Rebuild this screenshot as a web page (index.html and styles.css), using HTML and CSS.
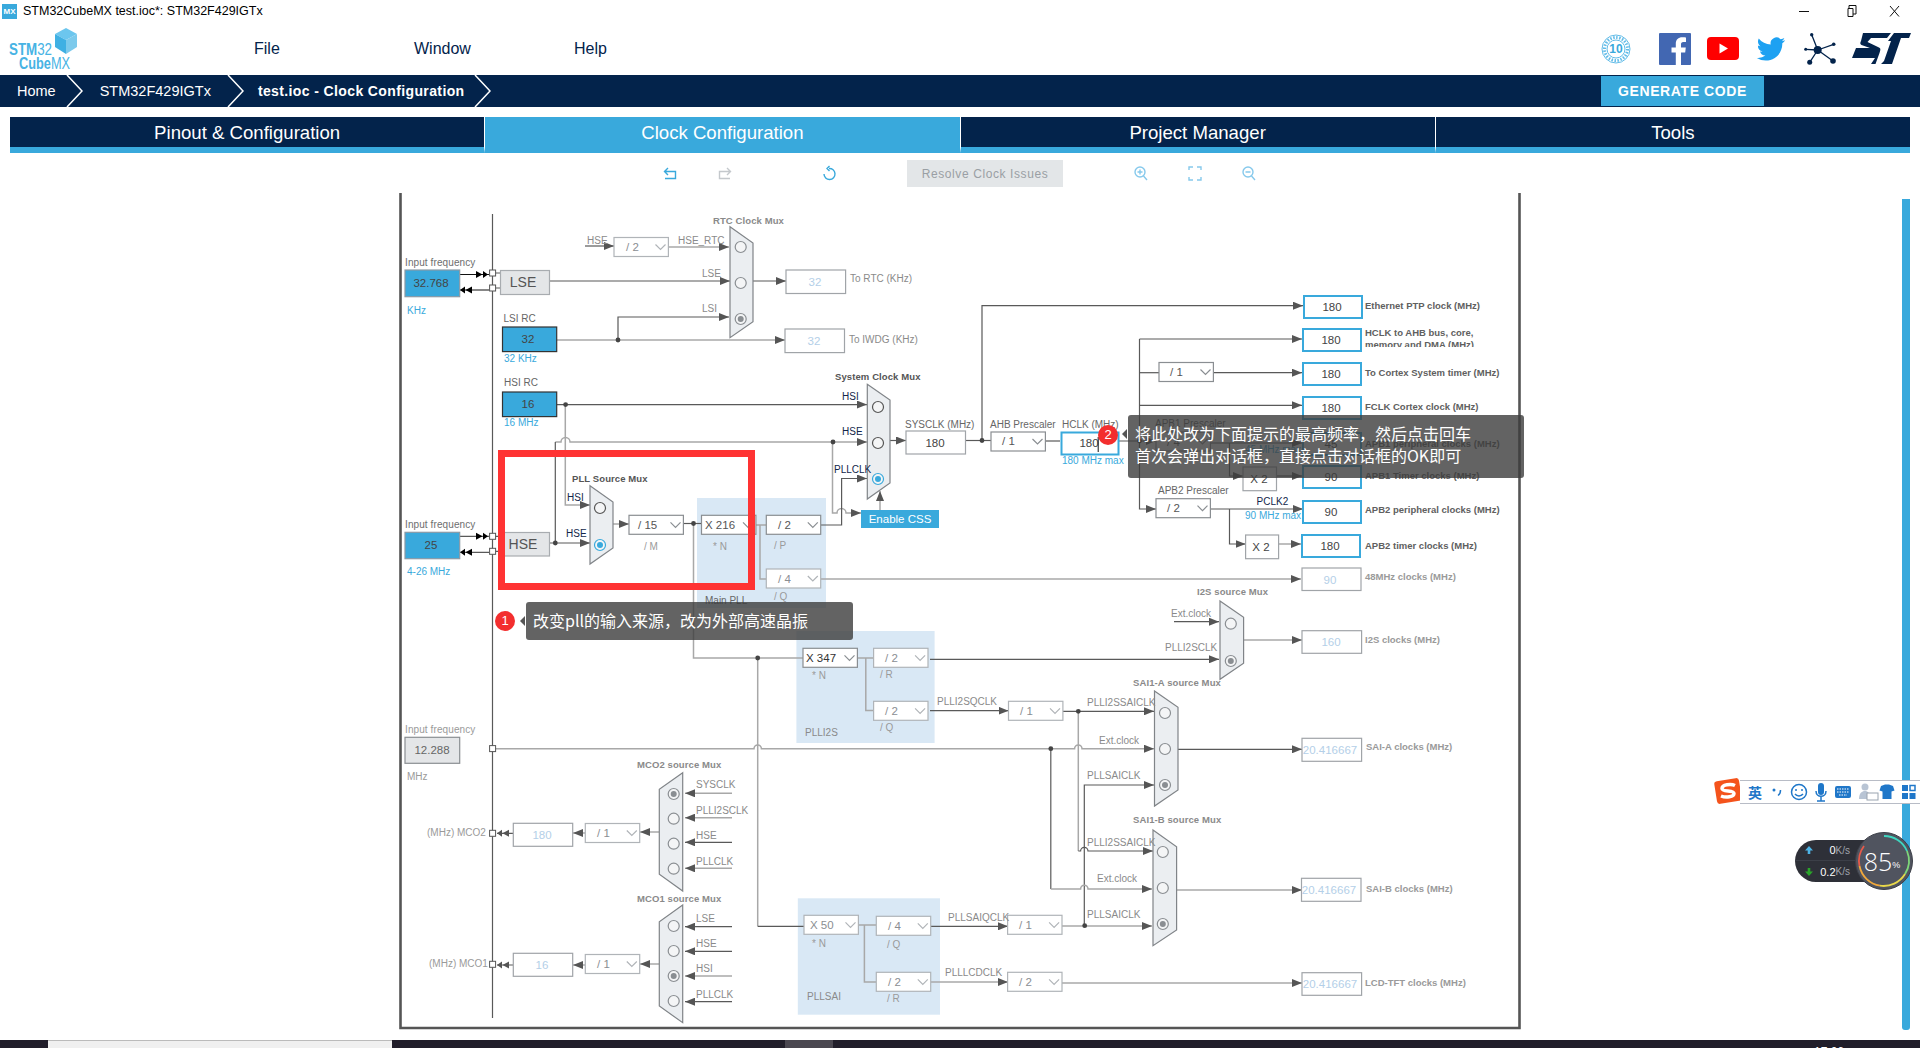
FILE: index.html
```html
<!DOCTYPE html>
<html lang="zh">
<head>
    <meta charset="UTF-8">
    <title>STM32CubeMX test.ioc*: STM32F429IGTx</title>
    <link rel="stylesheet" href="styles.css">
</head>
<body>

<div class="app">

    <div class="titlebar">
        <span class="app-icon">MX</span>
        <span class="title-text">STM32CubeMX test.ioc*: STM32F429IGTx</span>
        <svg class="win-buttons" width="110" height="14" viewBox="0 0 110 14">
            <path d="M9 7.5H19M59 4.5V1.5H66V10H63M58 4.5H63V12.5H58ZM100 2L109 12.5M109 2L100 12.5"/>
        </svg>
    </div>

    <div class="header">
        <svg class="logo" width="70" height="42" viewBox="0 0 70 42">
            <path class="cube-top" d="M57 0L68 6L57 12L46 6Z"/>
            <path class="cube-left" d="M46 6L57 12V26L46 19Z"/>
            <path class="cube-right" d="M68 6L57 12V26L68 19Z"/>
            <text class="logo-text" x="0" y="27" textLength="43" lengthAdjust="spacingAndGlyphs"><tspan class="logo-bold">STM</tspan>32</text>
            <text class="logo-text" x="10" y="41" textLength="51" lengthAdjust="spacingAndGlyphs"><tspan class="logo-bold">Cube</tspan>MX</text>
        </svg>
        <nav class="menu">
            <span>File</span>
            <span>Window</span>
            <span>Help</span>
        </nav>
        <div class="social">
            <svg class="seal" width="30" height="30" viewBox="0 0 30 30">
                <circle cx="15" cy="15" r="14"/>
                <circle class="seal-dash" cx="15" cy="15" r="11.5"/>
                <circle cx="15" cy="15" r="9"/>
                <text x="15" y="19" class="seal-text">10</text>
            </svg>
            <svg width="32" height="32" viewBox="0 0 32 32">
                <rect class="fb" width="32" height="32" rx="1"/>
                <path class="white" d="M22 32V19.5h4.2l.6-5H22v-3.2c0-1.4.4-2.4 2.4-2.4h2.6V4.5c-.5 0-2-.2-3.8-.2-3.8 0-6.4 2.3-6.4 6.5v3.7h-4.3v5h4.3V32z"/>
            </svg>
            <svg width="32" height="24" viewBox="0 0 32 24">
                <rect class="yt" width="32" height="23" rx="4"/>
                <path class="white" d="M12.5 6.5L21 11.5L12.5 16.5Z"/>
            </svg>
            <svg width="32" height="26" viewBox="0 1 24 22">
                <path class="tw" d="M23.953 4.57a10 10 0 01-2.825.775 4.958 4.958 0 002.163-2.723c-.951.555-2.005.959-3.127 1.184a4.92 4.92 0 00-8.384 4.482C7.69 8.095 4.067 6.13 1.64 3.162a4.822 4.822 0 00-.666 2.475c0 1.71.87 3.213 2.188 4.096a4.904 4.904 0 01-2.228-.616v.06a4.923 4.923 0 003.946 4.827 4.996 4.996 0 01-2.212.085 4.936 4.936 0 004.604 3.417 9.867 9.867 0 01-6.102 2.105c-.39 0-.779-.023-1.17-.067a13.995 13.995 0 007.557 2.209c9.053 0 13.998-7.496 13.998-13.985 0-.21 0-.42-.015-.63A9.935 9.935 0 0024 4.59z"/>
            </svg>
            <svg class="net" width="33" height="32" viewBox="0 0 33 32">
                <path d="M14.7 17L8.7 1.7M14.7 17L30.7 11.3M14.7 17L30 28M14.7 17L6.7 29.3M14.7 17L2.7 16.3"/>
                <circle cx="14.7" cy="17" r="4"/>
                <circle cx="8.7" cy="1.7" r="1.7"/>
                <circle cx="30.7" cy="11.3" r="1.8"/>
                <circle cx="30" cy="28" r="2.8"/>
                <circle cx="6.7" cy="29.3" r="2.5"/>
                <circle cx="2.7" cy="16.3" r="1.5"/>
            </svg>
            <svg class="st" width="59" height="32" viewBox="0 0 59 32">
                <path d="M11 0H39L35 5H19L15.5 9L27 14.5C29 15.5 28.5 17 27.5 20L23.5 31H19L23 25H0L4 15H18L9.5 12C8 11 8 10 9 8Z"/>
                <path d="M42 0H59L57 5H49L40 31H29L32 28L39 8H36Z"/>
            </svg>
        </div>
    </div>

    <div class="breadcrumb">
        <span class="crumb crumb-home">Home</span>
        <svg class="chevron" width="17" height="32" viewBox="0 0 17 32"><path d="M1 0L16 16L1 32"/></svg>
        <span class="crumb crumb-device">STM32F429IGTx</span>
        <svg class="chevron" width="17" height="32" viewBox="0 0 17 32"><path d="M1 0L16 16L1 32"/></svg>
        <span class="crumb crumb-current">test.ioc - Clock Configuration</span>
        <svg class="chevron" width="17" height="32" viewBox="0 0 17 32"><path d="M1 0L16 16L1 32"/></svg>
        <button class="generate">GENERATE CODE</button>
    </div>

    <div class="tabs">
        <div class="tab">Pinout &amp; Configuration</div>
        <div class="tab active">Clock Configuration</div>
        <div class="tab">Project Manager</div>
        <div class="tab">Tools</div>
    </div>

    <div class="toolbar">
        <svg class="tool undo" width="16" height="27" viewBox="0 0 16 27"><path d="M6 8L2.500 11.500L6 15M3 11.500H13.500V18.500H3"/></svg>
        <svg class="tool redo" width="16" height="27" viewBox="0 0 16 27"><path d="M10 8L13.500 11.500L10 15M13 11.500H2.500V18.500H13"/></svg>
        <svg class="tool refresh" width="16" height="27" viewBox="0 0 16 27"><path d="M8 8.5A5.5 5.5 0 1 1 3 14M8.5 6L6 8.5L8.5 11"/></svg>
        <button class="resolve">Resolve Clock Issues</button>
        <svg class="tool zoom-in" width="16" height="27" viewBox="0 0 16 27"><circle cx="7" cy="12" r="5"/><path d="M10.5 16L14 20M7 9.5V14.5M4.5 12H9.5"/></svg>
        <svg class="tool fit" width="16" height="27" viewBox="0 0 16 27"><path d="M2 10V7H6M10 7H14V10M14 17V20H10M6 20H2V17"/></svg>
        <svg class="tool zoom-out" width="16" height="27" viewBox="0 0 16 27"><circle cx="7" cy="12" r="5"/><path d="M10.5 16L14 20M4.5 12H9.5"/></svg>
    </div>

    <div class="workspace">
        <svg class="diagram" width="1140" height="850" viewBox="390 190 1140 850">
            <defs>
                <marker id="a" markerUnits="userSpaceOnUse" markerWidth="10" markerHeight="8" refX="10" refY="4" orient="auto">
                    <path class="head" d="M0 0L10 4L0 8Z"/>
                </marker>
                <g id="sel">
                    <rect width="54.4" height="19"/>
                    <path class="chev" d="M41.5 7L46.5 12L51.5 7"/>
                </g>
                <path id="dr" d="M0 -3.5L6.5 0L0 3.5ZM7 -3.5L12 0L7 3.5Z"/>
                <path id="dl" d="M12 -3.5L5.5 0L12 3.5ZM5 -3.5L0 0L5 3.5Z"/>
                <rect id="pin" x="-3" y="-3" width="6" height="6"/>
                <circle id="dot" r="2.4"/>
                <circle id="rad" r="5.5"/>
                <clipPath id="hclk-clip"><rect x="1360" y="326" width="130" height="21"/></clipPath>
            </defs>

            <!-- PLL backgrounds -->
            <rect class="pll-bg" x="697" y="498" width="129" height="110"/>
            <rect class="pll-bg" x="796.4" y="631" width="138.2" height="112"/>
            <rect class="pll-bg" x="797.8" y="898.3" width="142.2" height="116.4"/>

            <path class="frame" d="M400.5 193V1028H1519.5V193"/>
            <path class="d" d="M492.5 214V1018"/>

            <!-- RTC / LSI -->
            <path class="d" marker-end="url(#a)" d="M585 246H614"/>
            <path class="l" marker-end="url(#a)" d="M668 247H729"/>
            <path class="d" marker-end="url(#a)" d="M550 281H730"/>
            <path class="d" marker-end="url(#a)" d="M753 281H786"/>
            <path class="d" marker-end="url(#a)" d="M618 340V317H729"/>
            <path class="l" marker-end="url(#a)" d="M557 340H785"/>
            <path class="k" d="M460 274.5H489M460 290H489"/>
            <path class="d" d="M495.5 273H500M495.5 288H500M460 536.3H489M460 552.3H489M495.5 536.3H500M495.5 551.3H500"/>

            <!-- HSI / HSE / PLL source -->
            <path class="d" marker-end="url(#a)" d="M557 404.6H867"/>
            <path class="l" marker-end="url(#a)" d="M565.3 404.6V505H590"/>
            <path class="l" marker-end="url(#a)" d="M555.3 442H561a4.5 4.5 0 0 1 9 0H867"/>
            <path class="d" d="M555.3 442V543"/>
            <path class="d" marker-end="url(#a)" d="M550 543H590"/>
            <path class="l" marker-end="url(#a)" d="M832.5 442V513H837a4.5 4.5 0 0 1 9 0H861"/>
            <path class="d" marker-end="url(#a)" d="M821 525H841.6V478.5H867"/>
            <path class="l" marker-end="url(#a)" d="M613 524H629"/>
            <path class="d" d="M683.5 523.5H701.5"/>
            <path class="l" d="M693.5 523.5V658H803"/>
            <path class="l" d="M757.7 658V926.3"/>
            <path class="d" d="M757.7 926.3H804"/>
            <path class="l" d="M756 525H766M760 525V579H766"/>
            <path class="l" marker-end="url(#a)" d="M821 579H1301"/>

            <!-- System clock -->
            <path class="d" marker-end="url(#a)" d="M890 440.5H906"/>
            <path class="d" d="M965.5 440.5H991"/>
            <path class="d" marker-end="url(#a)" d="M982 440.5V305.7H1303"/>
            <path class="d" d="M1045.7 441H1060"/>
            <path class="d" marker-end="url(#a)" d="M1119 441H1156"/>
            <path class="d" marker-end="url(#a)" d="M1139.5 339V509H1156"/>
            <path class="d" marker-end="url(#a)" d="M1139.5 339H1302"/>
            <path class="d" d="M1139.5 372.7H1159"/>
            <path class="d" marker-end="url(#a)" d="M1213.5 372.7H1302"/>
            <path class="d" marker-end="url(#a)" d="M1139.5 405.3H1302"/>
            <path class="d" marker-end="url(#a)" d="M1210 443H1302"/>
            <path class="d" marker-end="url(#a)" d="M1229.5 443V476H1243"/>
            <path class="d" marker-end="url(#a)" d="M1276.5 476H1302"/>
            <path class="d" marker-end="url(#a)" d="M1210.6 509H1303"/>
            <path class="d" marker-end="url(#a)" d="M1229.5 509V544H1245.6"/>
            <path class="l" marker-end="url(#a)" d="M1278.6 544H1301"/>
            <path class="l" marker-end="url(#a)" d="M880 510V491"/>

            <!-- I2S -->
            <path class="d" marker-end="url(#a)" d="M1174 621.7H1219"/>
            <path class="d" marker-end="url(#a)" d="M930 659.3H1219"/>
            <path class="l" marker-end="url(#a)" d="M1243.6 640H1302"/>
            <path class="l" d="M858 658H874M865.8 658V710.5H874"/>

            <!-- SAI -->
            <path class="d" marker-end="url(#a)" d="M930 710.7H1008.5"/>
            <path class="d" marker-end="url(#a)" d="M1062.7 711.3H1154"/>
            <path class="l" marker-end="url(#a)" d="M492.6 748.7H754a3.7 3.7 0 0 1 7.4 0H1074.600a3.700 3.700 0 0 1 7.400 0H1154"/>
            <path class="d" marker-end="url(#a)" d="M1084.3 925.7V785H1154"/>
            <path class="l" d="M1078.3 711.3V851"/>
            <path class="d" marker-end="url(#a)" d="M1078.3 851H1080.600a3.700 3.700 0 0 1 7.400 0H1153"/>
            <path class="d" d="M1050.8 748.7V889"/>
            <path class="l" marker-end="url(#a)" d="M1050.8 889H1080.600a3.700 3.700 0 0 1 7.400 0H1152"/>
            <path class="d" marker-end="url(#a)" d="M1178 749.3H1302"/>
            <path class="l" marker-end="url(#a)" d="M1176.6 890H1302"/>
            <path class="l" marker-end="url(#a)" d="M1061.7 983H1302"/>
            <path class="l" d="M858.4 925H876M864.4 925V982H876"/>
            <path class="d" marker-end="url(#a)" d="M930.5 926.3H1008"/>
            <path class="l" marker-end="url(#a)" d="M930.5 982H1008"/>
            <path class="l" marker-end="url(#a)" d="M1061.7 926H1152"/>

            <!-- MCO -->
            <path class="l" marker-end="url(#a)" d="M732 793.3H685"/>
            <path class="l" marker-end="url(#a)" d="M732 817.7H685"/>
            <path class="d" marker-end="url(#a)" d="M732 842.3H685"/>
            <path class="l" marker-end="url(#a)" d="M732 868.3H685"/>
            <path class="l" marker-end="url(#a)" d="M659 832H640"/>
            <path class="l" marker-end="url(#a)" d="M585 833H573"/>
            <path class="d" marker-end="url(#a)" d="M732 926.7H685"/>
            <path class="d" marker-end="url(#a)" d="M732 951.3H685"/>
            <path class="l" marker-end="url(#a)" d="M732 976H685"/>
            <path class="d" marker-end="url(#a)" d="M732 1001.7H685"/>
            <path class="l" marker-end="url(#a)" d="M659 964H640"/>
            <path class="l" marker-end="url(#a)" d="M585 965H573"/>
            <path class="d" d="M497 833.3H513M497 965H513"/>

            <use class="ar-k" href="#dr" x="476" y="274.5"/>
            <use class="ar-k" href="#dl" x="460" y="290"/>
            <use class="ar-k" href="#dr" x="476" y="536.3"/>
            <use class="ar-k" href="#dl" x="460" y="552.3"/>
            <use class="ar-d" href="#dl" x="497" y="833.3"/>
            <use class="ar-d" href="#dl" x="497" y="965"/>

            <use class="pin" href="#pin" x="492.6" y="273"/>
            <use class="pin" href="#pin" x="492.6" y="288"/>
            <use class="pin" href="#pin" x="492.6" y="536.3"/>
            <use class="pin" href="#pin" x="492.6" y="551.3"/>
            <use class="pin" href="#pin" x="492.6" y="748.6"/>
            <use class="pin" href="#pin" x="492.6" y="833.3"/>
            <use class="pin" href="#pin" x="492.6" y="964.3"/>

            <use class="joint" href="#dot" x="618" y="340"/>
            <use class="joint" href="#dot" x="565.6" y="404.6"/>
            <use class="joint" href="#dot" x="833" y="442"/>
            <use class="joint" href="#dot" x="555.3" y="543"/>
            <use class="joint" href="#dot" x="693.5" y="523.5"/>
            <use class="joint" href="#dot" x="757.7" y="658"/>
            <use class="joint" href="#dot" x="982" y="440.5"/>
            <use class="joint" href="#dot" x="1139.5" y="441"/>
            <use class="joint" href="#dot" x="1078.3" y="711.3"/>
            <use class="joint" href="#dot" x="1050.8" y="748.7"/>
            <use class="joint" href="#dot" x="1084.7" y="925.7"/>

            <!-- Muxes -->
            <polygon class="mux" points="730,226.7 753,243 753,321.7 730,337.7"/>
            <polygon class="mux" points="590,485.7 613,502 613,548 590,564"/>
            <polygon class="mux" points="867.3,384.3 890,400 890,483 867.3,499"/>
            <polygon class="mux" points="1220,601 1243.6,617.3 1243.6,663.3 1220,679.3"/>
            <polygon class="mux" points="1154.5,691 1178,707.3 1178,790 1154.5,806"/>
            <polygon class="mux" points="1153,830 1176.6,846.7 1176.6,930 1153,945.7"/>
            <polygon class="mux" points="682.7,772.7 659.3,789.3 659.3,874.3 682.7,891"/>
            <polygon class="mux" points="682.7,905 659.3,921.7 659.3,1006 682.7,1022.7"/>

            <use class="radio" href="#rad" x="740.7" y="247"/>
            <use class="radio" href="#rad" x="740.7" y="283"/>
            <use class="radio" href="#rad" x="740.7" y="319"/><circle class="radio-on" cx="740.7" cy="319" r="3"/>
            <use class="radio dark" href="#rad" x="600" y="508"/>
            <use class="radio blue" href="#rad" x="600" y="545"/><circle class="radio-blue" cx="600" cy="545" r="3"/>
            <use class="radio dark" href="#rad" x="878" y="407"/>
            <use class="radio dark" href="#rad" x="878" y="443"/>
            <use class="radio blue" href="#rad" x="878" y="479"/><circle class="radio-blue" cx="878" cy="479" r="3"/>
            <use class="radio" href="#rad" x="1230.8" y="623.7"/>
            <use class="radio" href="#rad" x="1230.8" y="661"/><circle class="radio-on" cx="1230.8" cy="661" r="3"/>
            <use class="radio" href="#rad" x="1165" y="713"/>
            <use class="radio" href="#rad" x="1165" y="749"/>
            <use class="radio" href="#rad" x="1165" y="785"/><circle class="radio-on" cx="1165" cy="785" r="3"/>
            <use class="radio" href="#rad" x="1162.8" y="852"/>
            <use class="radio" href="#rad" x="1162.8" y="888"/>
            <use class="radio" href="#rad" x="1162.8" y="924"/><circle class="radio-on" cx="1162.8" cy="924" r="3"/>
            <use class="radio" href="#rad" x="673.7" y="794"/><circle class="radio-on" cx="673.7" cy="794" r="3"/>
            <use class="radio" href="#rad" x="673.7" y="818.7"/>
            <use class="radio" href="#rad" x="673.7" y="843.7"/>
            <use class="radio" href="#rad" x="673.7" y="868.7"/>
            <use class="radio" href="#rad" x="673.7" y="926"/>
            <use class="radio" href="#rad" x="673.7" y="951"/>
            <use class="radio" href="#rad" x="673.7" y="976"/><circle class="radio-on" cx="673.7" cy="976" r="3"/>
            <use class="radio" href="#rad" x="673.7" y="1001"/>

            <!-- Source boxes -->
            <rect class="src" x="405" y="270" width="54.7" height="26.7"/><text class="val" x="431" y="283">32.768</text>
            <rect class="src" x="405" y="532.3" width="54.7" height="26.4"/><text class="val" x="431" y="545">25</text>
            <rect class="src-off" x="405" y="737.3" width="54.7" height="26"/><text class="val off" x="432" y="750">12.288</text>
            <rect class="rc" x="502.5" y="327" width="54.2" height="24.6"/><text class="val" x="528" y="339">32</text>
            <rect class="rc" x="502.5" y="392" width="54.2" height="24.6"/><text class="val" x="528" y="404">16</text>
            <rect class="osc" x="500.5" y="270.5" width="49" height="24"/><text class="osc-text" x="523" y="282">LSE</text>
            <rect class="osc" x="500.5" y="532.5" width="49" height="23.5"/><text class="osc-text" x="523" y="544">HSE</text>

            <!-- Selects -->
            <use class="sel off" href="#sel" x="614" y="237.5"/><text class="sv off" x="626" y="247">/ 2</text>
            <use class="sel" href="#sel" x="629" y="515.3"/><text class="sv" x="638" y="525">/ 15</text>
            <use class="sel" href="#sel" x="701.5" y="515.3"/><text class="sv" x="705" y="525">X 216</text>
            <use class="sel" href="#sel" x="766.3" y="515.3"/><text class="sv" x="778" y="525">/ 2</text>
            <use class="sel off" href="#sel" x="766.3" y="569"/><text class="sv off" x="778" y="579">/ 4</text>
            <use class="sel" href="#sel" x="991" y="432"/><text class="sv" x="1002" y="441">/ 1</text>
            <use class="sel" href="#sel" x="1159" y="362.5"/><text class="sv" x="1170" y="372">/ 1</text>
            <use class="sel" href="#sel" x="1156" y="432"/><text class="sv" x="1167" y="442">/ 4</text>
            <use class="sel" href="#sel" x="1156" y="498.7"/><text class="sv" x="1167" y="508">/ 2</text>
            <use class="sel" href="#sel" x="803" y="648.3"/><text class="sv dark" x="806" y="658">X 347</text>
            <use class="sel off" href="#sel" x="873.6" y="648.3"/><text class="sv off" x="885" y="658">/ 2</text>
            <use class="sel off" href="#sel" x="873.6" y="701.3"/><text class="sv off" x="885" y="711">/ 2</text>
            <use class="sel off" href="#sel" x="1008.5" y="701.3"/><text class="sv off" x="1020" y="711">/ 1</text>
            <use class="sel off" href="#sel" x="804" y="915.3"/><text class="sv off" x="810" y="925">X 50</text>
            <use class="sel off" href="#sel" x="876.3" y="916.3"/><text class="sv off" x="888" y="926">/ 4</text>
            <use class="sel off" href="#sel" x="876.3" y="972.3"/><text class="sv off" x="888" y="982">/ 2</text>
            <use class="sel off" href="#sel" x="1007.6" y="915.3"/><text class="sv off" x="1019" y="925">/ 1</text>
            <use class="sel off" href="#sel" x="1007.6" y="972.3"/><text class="sv off" x="1019" y="982">/ 2</text>
            <use class="sel off" href="#sel" x="585.3" y="823.5"/><text class="sv off" x="597" y="833">/ 1</text>
            <use class="sel off" href="#sel" x="585.3" y="954.5"/><text class="sv off" x="597" y="964">/ 1</text>

            <!-- Value boxes -->
            <rect class="dim" x="786" y="270" width="59.6" height="23.5"/><text class="val faint" x="815" y="282">32</text>
            <rect class="dim" x="785" y="329" width="59.5" height="23.6"/><text class="val faint" x="814" y="341">32</text>
            <rect class="dim" x="1302" y="568" width="59" height="22.5"/><text class="val faint" x="1330" y="580">90</text>
            <rect class="dim" x="1302" y="630.7" width="59.6" height="22.6"/><text class="val faint" x="1331" y="642">160</text>
            <rect class="dim" x="1302" y="738.3" width="59.6" height="23"/><text class="val faint" x="1330" y="750">20.416667</text>
            <rect class="dim" x="1301.5" y="878.3" width="59.5" height="23"/><text class="val faint" x="1329" y="890">20.416667</text>
            <rect class="dim" x="1302" y="972.7" width="59.6" height="22.6"/><text class="val faint" x="1330" y="984">20.416667</text>
            <rect class="dim" x="513.3" y="823.3" width="59.4" height="23"/><text class="val faint" x="542" y="835">180</text>
            <rect class="dim" x="513.3" y="953.3" width="59.4" height="23"/><text class="val faint" x="542" y="965">16</text>
            <rect class="dim" x="906" y="431" width="59.5" height="23"/><text class="val" x="935" y="443">180</text>
            <rect class="dim" x="1243" y="467" width="33.5" height="23.7"/><text class="val" x="1259" y="479">X 2</text>
            <rect class="dim" x="1245.6" y="535" width="33" height="23.7"/><text class="val" x="1261" y="547">X 2</text>

            <rect class="out" x="1061.5" y="432.5" width="57" height="22"/><text class="val" x="1089" y="443">180</text>
            <path class="caret" d="M1098.2 437V452"/>
            <rect class="out" x="1304" y="296" width="58" height="22"/><text class="val" x="1332" y="307">180</text>
            <rect class="out" x="1303" y="329" width="58" height="22"/><text class="val" x="1331" y="340">180</text>
            <rect class="out" x="1303" y="363" width="58" height="22"/><text class="val" x="1331" y="374">180</text>
            <rect class="out" x="1303" y="397" width="58" height="22"/><text class="val" x="1331" y="408">180</text>
            <rect class="out" x="1303" y="433" width="58" height="22"/><text class="val" x="1331" y="444">45</text>
            <rect class="out" x="1303" y="466" width="58" height="22"/><text class="val" x="1331" y="477">90</text>
            <rect class="out" x="1303" y="501" width="58" height="22"/><text class="val" x="1331" y="512">90</text>
            <rect class="out" x="1302" y="535" width="58" height="22"/><text class="val" x="1330" y="546">180</text>

            <rect class="enable" x="861" y="510" width="78" height="18"/>
            <text class="enable-text" x="900" y="519">Enable CSS</text>

            <!-- Labels -->
            <text class="lb spaced" x="405" y="262">Input frequency</text>
            <text class="lb blue" x="407" y="310">KHz</text>
            <text class="lb spaced" x="405" y="524.500">Input frequency</text>
            <text class="lb blue" x="407" y="571.5">4-26 MHz</text>
            <text class="lb spaced faded" x="405" y="729.7">Input frequency</text>
            <text class="lb faded" x="407" y="776.7">MHz</text>
            <text class="lb gray" x="503.5" y="318">LSI RC</text>
            <text class="lb blue" x="504" y="358">32 KHz</text>
            <text class="lb gray" x="504" y="382">HSI RC</text>
            <text class="lb blue" x="504" y="422.5">16 MHz</text>
            <text class="lb" x="587" y="240">HSE</text>
            <text class="lb" x="678" y="240">HSE_RTC</text>
            <text class="lb" x="702" y="273">LSE</text>
            <text class="lb" x="702" y="308">LSI</text>
            <text class="ttl" x="713" y="220">RTC Clock Mux</text>
            <text class="ttl dk" x="572" y="478">PLL Source Mux</text>
            <text class="lb dk" x="567" y="497">HSI</text>
            <text class="lb dk" x="566" y="533">HSE</text>
            <text class="lb faded" x="644" y="546">/ M</text>
            <text class="lb faded" x="713" y="546">* N</text>
            <text class="lb faded" x="774" y="545">/ P</text>
            <text class="lb faded" x="774" y="596">/ Q</text>
            <text class="lb gray" x="705" y="600">Main PLL</text>
            <text class="lb" x="850" y="278">To RTC (KHz)</text>
            <text class="lb" x="849" y="339">To IWDG (KHz)</text>
            <text class="ttl dk" x="835" y="376.7">System Clock Mux</text>
            <text class="lb dk" x="842" y="396.7">HSI</text>
            <text class="lb dk" x="842" y="431.7">HSE</text>
            <text class="lb dk" x="834" y="469.5">PLLCLK</text>
            <text class="lb gray" x="905" y="424">SYSCLK (MHz)</text>
            <text class="lb gray" x="990" y="424">AHB Prescaler</text>
            <text class="lb gray" x="1062" y="424">HCLK (MHz)</text>
            <text class="lb blue" x="1062" y="460">180 MHz max</text>
            <text class="lb gray" x="1155" y="423">APB1 Prescaler</text>
            <text class="lb blue" x="1245" y="449">45 MHz max</text>
            <text class="lb gray" x="1158" y="490">APB2 Prescaler</text>
            <text class="lb dk" x="1256.6" y="501.7">PCLK2</text>
            <text class="lb blue" x="1245" y="515.7">90 MHz max</text>
            <text class="ol" x="1365" y="305.7">Ethernet PTP clock (MHz)</text>
            <text class="ol" x="1365" y="332">HCLK to AHB bus, core,</text>
            <text class="ol" x="1365" y="344.5" clip-path="url(#hclk-clip)">memory and DMA (MHz)</text>
            <text class="ol" x="1365" y="372.7">To Cortex System timer (MHz)</text>
            <text class="ol" x="1365" y="406.7">FCLK Cortex clock (MHz)</text>
            <text class="ol" x="1365" y="443">APB1 peripheral clocks (MHz)</text>
            <text class="ol" x="1365" y="475">APB1 Timer clocks (MHz)</text>
            <text class="ol" x="1365" y="509.7">APB2 peripheral clocks (MHz)</text>
            <text class="ol" x="1365" y="545">APB2 timer clocks (MHz)</text>
            <text class="ol faded" x="1365" y="576">48MHz clocks (MHz)</text>
            <text class="ttl" x="1197" y="591">I2S source Mux</text>
            <text class="lb" x="1171" y="613">Ext.clock</text>
            <text class="lb" x="1165" y="647.7">PLLI2SCLK</text>
            <text class="ol faded" x="1365" y="639.500">I2S clocks (MHz)</text>
            <text class="lb faded" x="812" y="675">* N</text>
            <text class="lb faded" x="880" y="674">/ R</text>
            <text class="lb faded" x="880" y="727">/ Q</text>
            <text class="lb" x="805" y="732.7">PLLI2S</text>
            <text class="lb" x="937" y="701.7">PLLI2SQCLK</text>
            <text class="ttl" x="1133" y="682">SAI1-A source Mux</text>
            <text class="lb" x="1087" y="702.7">PLLI2SSAICLK</text>
            <text class="lb" x="1099" y="740">Ext.clock</text>
            <text class="lb" x="1087" y="775.7">PLLSAICLK</text>
            <text class="ol faded" x="1366" y="746.500">SAI-A clocks (MHz)</text>
            <text class="ttl" x="1133" y="819.500">SAI1-B source Mux</text>
            <text class="lb" x="1087" y="842">PLLI2SSAICLK</text>
            <text class="lb" x="1097" y="878">Ext.clock</text>
            <text class="lb" x="1087" y="914">PLLSAICLK</text>
            <text class="ol faded" x="1366" y="888.500">SAI-B clocks (MHz)</text>
            <text class="lb faded" x="812" y="943.7">* N</text>
            <text class="lb faded" x="887" y="944">/ Q</text>
            <text class="lb faded" x="887" y="998.7">/ R</text>
            <text class="lb" x="807" y="996.7">PLLSAI</text>
            <text class="lb" x="948" y="917.7">PLLSAIQCLK</text>
            <text class="lb" x="945" y="972.7">PLLLCDCLK</text>
            <text class="ol faded" x="1365" y="982.500">LCD-TFT clocks (MHz)</text>
            <text class="ttl" x="637" y="764.7">MCO2 source Mux</text>
            <text class="lb" x="696" y="784.7">SYSCLK</text>
            <text class="lb" x="696" y="810.7">PLLI2SCLK</text>
            <text class="lb" x="696" y="835.7">HSE</text>
            <text class="lb" x="696" y="861.7">PLLCLK</text>
            <text class="lb faded" x="427" y="832.7">(MHz) MCO2</text>
            <text class="ttl" x="637" y="898.7">MCO1 source Mux</text>
            <text class="lb" x="696" y="918.7">LSE</text>
            <text class="lb" x="696" y="943.7">HSE</text>
            <text class="lb" x="696" y="968.7">HSI</text>
            <text class="lb" x="696" y="994">PLLCLK</text>
            <text class="lb faded" x="429" y="963.7">(MHz) MCO1</text>
        </svg>
        <div class="scrollbar"></div>
    </div>

    <div class="taskbar">
        <div class="task-start"></div>
        <div class="task-search"></div>
        <div class="task-space"></div>
        <div class="task-active"></div>
        <div class="task-clock">17:06</div>
    </div>

    <!-- annotations and overlays on top of the window -->
    <div class="highlight"></div>

    <div class="badge badge-one">1</div>
    <div class="tip-arrow tip-arrow-one"></div>
    <div class="tip tip-one">改变pll的输入来源，改为外部高速晶振</div>

    <div class="badge badge-two">2</div>
    <div class="tip-arrow tip-arrow-two"></div>
    <div class="tip tip-two">将此处改为下面提示的最高频率，然后点击回车<br>首次会弹出对话框，直接点击对话框的OK即可</div>

    <svg class="ime-logo" width="30" height="28" viewBox="0 0 30 28">
        <rect x="2.5" y="2.5" width="25" height="23" rx="3" transform="rotate(-9 15 14)"/>
        <path d="M22 8.5C18 6.5 9 7.5 9 11.5C9 15.5 21 12.5 21 16.5C21 20 13 21 8 19"/>
    </svg>
    <div class="ime-bar">
        <span class="ime-lang">英</span>
        <svg width="150" height="22" viewBox="0 0 150 22">
            <circle cx="5" cy="9" r="1.5"/>
            <path class="ime-line" d="M11.500 9C11.500 12 10.500 13.500 9 14.500"/>
            <circle class="ime-line" cx="30" cy="11" r="7.5"/>
            <circle cx="27" cy="9" r="1"/><circle cx="33" cy="9" r="1"/>
            <path class="ime-line" d="M26 13C28 15.500 32 15.500 34 13"/>
            <rect x="49" y="2" width="6" height="12" rx="3"/>
            <path class="ime-line" d="M47 10C47 17 57 17 57 10M52 15V20M48 20H56"/>
            <rect x="66" y="5" width="16" height="12" rx="2"/>
            <path class="ime-keys" d="M68 8H80M68 11H80M70 14H78"/>
            <circle class="ime-grey" cx="96" cy="6" r="3.5"/>
            <path class="ime-grey" d="M90 18C90 12 93 10 96 10C99 10 101 12 101 18Z"/>
            <rect class="ime-card" x="98" y="12" width="11" height="7"/>
            <path d="M112 5L116 3.500H120L124 5L125.500 9.500L122.500 10.500V18H113.500V10.500L110.500 9.500Z"/>
            <rect x="133" y="4" width="6" height="6"/>
            <rect class="ime-line" x="141" y="4.500" width="5" height="5"/>
            <rect x="133" y="12" width="6" height="6"/>
            <rect x="140.500" y="12" width="6" height="6"/>
        </svg>
    </div>

    <div class="net-pill">
        <div class="net-row">
            <svg class="up" width="8" height="8" viewBox="0 0 8 8"><path d="M4 0L8 4.500H5.300V8H2.700V4.500H0Z"/></svg>
            <b>0</b><i>K/s</i>
        </div>
        <div class="net-row">
            <svg class="down" width="8" height="8" viewBox="0 0 8 8"><path d="M4 8L8 3.500H5.300V0H2.700V3.500H0Z"/></svg>
            <b>0.2</b><i>K/s</i>
        </div>
    </div>
    <div class="gauge">
        <svg width="58" height="58" viewBox="0 0 58 58">
            <path class="ring-teal" d="M29 4A25 25 0 0 1 52 19"/>
            <path class="ring-green" d="M52 19A25 25 0 0 1 50 42"/>
            <path class="ring-yellow" d="M50 42A25 25 0 0 1 25 53.700"/>
            <path class="ring-orange" d="M25 53.700A25 25 0 0 1 4.500 34"/>
            <path class="ring-red" d="M4.500 34A25 25 0 0 1 9 14"/>
        </svg>
        <span class="gauge-num">85</span><span class="gauge-pct">%</span>
    </div>

</div>

</body>
</html>
```

FILE: styles.css
```css
* {
    box-sizing: border-box;
}
html, body {
    margin: 0;
    width: 1920px;
    height: 1048px;
    overflow: hidden;
    background-color: #ffffff;
}
body {
    font-family: "Liberation Sans", Arial, sans-serif;
    color: #03234b;
}
.app {
    position: relative;
    width: 1920px;
    height: 1048px;
    display: flex;
    flex-direction: column;
}

/* window title */
.titlebar {
    height: 22px;
    display: flex;
    align-items: center;
    padding-left: 2px;
}
.app-icon {
    width: 15px;
    height: 15px;
    background-color: #39a9dc;
    color: #ffffff;
    font-size: 8px;
    font-weight: bold;
    text-align: center;
    line-height: 15px;
}
.title-text {
    margin-left: 6px;
    font-size: 12.5px;
    color: #000000;
}
.win-buttons {
    margin-left: auto;
    margin-right: 20px;
}
.win-buttons path {
    fill: none;
    stroke: #111111;
    stroke-width: 1;
}

/* logo, menu, social */
.header {
    height: 53px;
    display: flex;
    align-items: center;
}
.logo {
    margin-left: 9px;
    margin-top: 1px;
    width: 70px;
}
.cube-top { fill: #6cc6ee; }
.cube-left { fill: #3fb0e3; }
.cube-right { fill: #7ccaec; }
.logo-text {
    font-size: 16px;
    fill: #47b3e4;
}
.logo-bold {
    font-weight: bold;
}
.menu {
    display: flex;
    margin-left: 175px;
    font-size: 16px;
    color: #03234b;
}
.menu span {
    width: 160px;
}
.social {
    margin-left: auto;
    margin-right: 9px;
    display: flex;
    align-items: center;
    gap: 16px;
}
.seal {
    margin-right: 12px;
}
.seal circle {
    fill: none;
    stroke: #62bce8;
    stroke-width: 1;
}
.seal .seal-dash {
    stroke-width: 3;
    stroke-dasharray: 1.5 1.5;
}
.seal-text {
    font-size: 12px;
    font-weight: bold;
    text-anchor: middle;
    fill: #39a9dc;
}
.fb { fill: #4267b2; }
.yt { fill: #ff0000; }
.tw { fill: #1da1f2; }
.white { fill: #ffffff; }
.net circle { fill: #03234b; }
.net path {
    fill: none;
    stroke: #03234b;
    stroke-width: 1.3;
}
.st path { fill: #03234b; }

/* breadcrumb */
.breadcrumb {
    height: 32px;
    display: flex;
    align-items: center;
    background-color: #03234b;
    color: #ffffff;
}
.chevron path {
    fill: none;
    stroke: #ffffff;
    stroke-width: 1.5;
}
.chevron {
    flex-shrink: 0;
}
.crumb {
    font-size: 14.5px;
}
.crumb-home {
    margin-left: 17px;
    margin-right: 10px;
}
.crumb-device {
    margin-left: 17px;
    margin-right: 16px;
}
.crumb-current {
    margin-left: 14px;
    margin-right: 9px;
    font-weight: bold;
    font-size: 14px;
    letter-spacing: 0.38px;
}
.generate {
    margin-left: auto;
    margin-right: 156px;
    width: 163px;
    height: 30px;
    border: none;
    background-color: #39a9dc;
    color: #ffffff;
    font-family: inherit;
    font-size: 14px;
    font-weight: bold;
    letter-spacing: 0.6px;
}

/* tabs */
.tabs {
    display: flex;
    margin: 10px 10px 0;
    height: 36px;
}
.tab {
    flex: 1;
    background-color: #03234b;
    border-right: 1px solid #ffffff;
    border-bottom: 6px solid #39a9dc;
    color: #ffffff;
    font-size: 18.6px;
    text-align: center;
    line-height: 31px;
}
.tab:last-child {
    border-right: none;
}
.tab.active {
    background-color: #39a9dc;
}

/* toolbar */
.toolbar {
    height: 37px;
    padding: 7px 0 0 662px;
    display: flex;
    align-items: flex-start;
}
.tool path, .tool circle {
    fill: none;
    stroke-width: 1.4;
}
.undo path { stroke: #39a9dc; }
.redo { margin-left: 39px; }
.redo path { stroke: #c4c8cc; }
.refresh { margin-left: 88px; }
.refresh path { stroke: #39a9dc; }
.zoom-in { margin-left: 70px; }
.fit { margin-left: 38px; }
.zoom-out { margin-left: 38px; }
.zoom-in path, .zoom-in circle, .fit path, .zoom-out path, .zoom-out circle {
    stroke: #86c9ec;
}
.resolve {
    margin-left: 70px;
    width: 156px;
    height: 27px;
    border: none;
    background-color: #e3e6e8;
    color: #9a9fa4;
    font-family: inherit;
    font-size: 12px;
    letter-spacing: 0.6px;
}

/* diagram area */
.workspace {
    height: 850px;
    display: flex;
    padding-left: 390px;
}
.scrollbar {
    margin: 9px 10px 0 auto;
    width: 8px;
    height: 831px;
    border-radius: 0 0 3px 3px;
    background-color: #39a9dc;
}
.diagram text {
    dominant-baseline: central;
    font-family: "Liberation Sans", Arial, sans-serif;
}
.frame {
    fill: none;
    stroke: #555555;
    stroke-width: 2.6;
}
.d, .l, .k {
    fill: none;
}
.d {
    stroke: #595959;
    stroke-width: 1.2;
}
.l {
    stroke: #a8a8a8;
    stroke-width: 1.5;
}
.k {
    stroke: #111111;
    stroke-width: 1.2;
}
.head {
    fill: #555555;
}
.ar-k { fill: #000000; }
.ar-d { fill: #555555; }
.pin {
    fill: #ffffff;
    stroke: #555555;
}
.joint {
    fill: #444444;
}
.pll-bg {
    fill: #d9e8f5;
}
.mux {
    fill: #ebeef1;
    stroke: #808488;
    stroke-width: 1.2;
}
.radio {
    fill: #f4f5f6;
    stroke: #8a8e92;
    stroke-width: 1.2;
}
.radio.dark { stroke: #555555; }
.radio.blue { stroke: #39a9dc; }
.radio-on { fill: #8a8e92; }
.radio-blue { fill: #39a9dc; }
.src {
    fill: #39a9dc;
    stroke: #8a9aa6;
    stroke-width: 1.2;
}
.src-off {
    fill: #e4e6e8;
    stroke: #8a8e92;
    stroke-width: 1.2;
}
.rc {
    fill: #39a9dc;
    stroke: #333333;
    stroke-width: 1.2;
}
.osc {
    fill: #e4e6e8;
    stroke: #a8acb0;
    stroke-width: 1.2;
}
.osc-text {
    font-size: 14px;
    text-anchor: middle;
    fill: #555555;
}
.sel {
    fill: #ffffff;
    stroke: #8a8e92;
    stroke-width: 1.2;
}
.sel.off {
    stroke: #b0b4b8;
}
.chev {
    fill: none;
}
.sv {
    font-size: 11.5px;
    fill: #555555;
}
.sv.off { fill: #8a8e92; }
.sv.dark { fill: #333333; }
.dim {
    fill: #ffffff;
    stroke: #a0a4a8;
    stroke-width: 1.2;
}
.out {
    fill: #ffffff;
    stroke: #39a9dc;
    stroke-width: 2;
}
.caret {
    stroke: #111111;
}
.val {
    font-size: 11.5px;
    text-anchor: middle;
    fill: #444444;
}
.val.off { fill: #666666; }
.val.faint { fill: #b4cfe8; }
.enable { fill: #39a9dc; }
.enable-text {
    font-size: 11.5px;
    text-anchor: middle;
    fill: #ffffff;
}
.lb {
    font-size: 10px;
    fill: #8a8a8a;
}
.lb.spaced { letter-spacing: 0.1px; fill: #6e6e6e; }
.lb.blue { fill: #39a9dc; }
.lb.gray { fill: #666666; }
.lb.dk { fill: #12264a; }
.lb.faded, .lb.spaced.faded { fill: #9a9a9a; }
.ttl {
    font-size: 9.5px;
    font-weight: bold;
    fill: #8a8a8a;
    letter-spacing: 0.1px;
}
.ttl.dk { fill: #555555; }
.ol {
    font-size: 9.5px;
    font-weight: bold;
    fill: #606060;
}
.ol.faded { fill: #9a9a9a; }

/* taskbar */
.taskbar {
    height: 8px;
    display: flex;
    overflow: hidden;
    background-color: #211e2a;
}
.task-start { width: 48px; }
.task-search {
    width: 344px;
    background-color: #f0f0f0;
    border-top: 1px solid #bbbbbb;
}
.task-space { width: 393px; }
.task-active {
    width: 48px;
    background-color: #4a4750;
}
.task-clock {
    margin-left: auto;
    margin-right: 76px;
    padding-top: 5px;
    font-size: 12px;
    line-height: 14px;
    color: #ffffff;
}

/* annotations */
.highlight {
    position: absolute;
    left: 498px;
    top: 450px;
    width: 257px;
    height: 140px;
    border: 7px solid #ff3333;
}
.tip {
    position: absolute;
    background-color: rgba(60, 60, 60, 0.8);
    border-radius: 3px;
    color: #ffffff;
    font-family: "Noto Sans CJK SC", "Liberation Sans", sans-serif;
    font-size: 16px;
    line-height: 22px;
    white-space: nowrap;
}
.tip-one {
    left: 526px;
    top: 602px;
    width: 327px;
    height: 38px;
    padding: 7px 7px;
}
.tip-two {
    left: 1128px;
    top: 415px;
    width: 396px;
    height: 63px;
    padding: 7px 7px;
}
.tip-arrow {
    position: absolute;
    width: 0;
    height: 0;
    border-top: 5px solid transparent;
    border-bottom: 5px solid transparent;
    border-right: 5px solid #555555;
}
.tip-arrow-one {
    left: 520px;
    top: 616px;
}
.tip-arrow-two {
    left: 1122px;
    top: 429px;
}
.badge {
    position: absolute;
    width: 20px;
    height: 20px;
    border-radius: 50%;
    background-color: #f32e2e;
    color: #ffffff;
    font-size: 13px;
    line-height: 19px;
    text-align: center;
}
.badge-one {
    left: 495px;
    top: 611px;
}
.badge-two {
    left: 1098px;
    top: 425px;
}

/* input method bar */
.ime-logo {
    position: absolute;
    left: 1713px;
    top: 777px;
}
.ime-logo rect { fill: #f4531c; }
.ime-logo path {
    fill: none;
    stroke: #ffffff;
    stroke-width: 3.5;
}
.ime-bar {
    position: absolute;
    left: 1740px;
    top: 780px;
    width: 180px;
    height: 24px;
    border-top: 1px solid #b8bcc6;
    border-bottom: 1px solid #b8bcc6;
    background-color: #ffffff;
    display: flex;
    align-items: center;
    gap: 7px;
    padding-left: 8px;
    fill: #1f77c9;
}
.ime-lang {
    font-family: "Noto Sans CJK SC", sans-serif;
    font-size: 14px;
    font-weight: bold;
    color: #1f77c9;
}
.ime-bar svg {
    flex-shrink: 0;
}
.ime-line {
    fill: none;
    stroke: #1f77c9;
    stroke-width: 1.5;
}
.ime-keys {
    fill: none;
    stroke: #ffffff;
    stroke-dasharray: 1.5 1;
}
.ime-grey { fill: #b8c4d4; }
.ime-card {
    fill: #ffffff;
    stroke: #9aa4b0;
}

/* network speed widget */
.net-pill {
    position: absolute;
    left: 1795px;
    top: 840px;
    width: 75px;
    height: 42px;
    border-radius: 21px 0 0 21px;
    background-color: #2e3038;
    color: #ffffff;
}
.net-row {
    height: 21px;
    display: flex;
    align-items: center;
    padding: 0 20px 0 10px;
    font-size: 11px;
}
.net-row:first-child {
    border-bottom: 1px solid #3c3f48;
}
.net-row b {
    margin-left: auto;
    font-weight: normal;
}
.net-row i {
    font-style: normal;
    color: #a0a4ac;
    font-size: 10px;
}
.up { fill: #4db4e6; }
.down { fill: #2aa52a; }
.gauge {
    position: absolute;
    left: 1855px;
    top: 832px;
    width: 58px;
    height: 58px;
    border-radius: 50%;
    background-color: #50545f;
    border: 1px solid #3c3f48;
    color: #ffffff;
    display: flex;
    align-items: center;
    justify-content: center;
}
.gauge svg {
    position: absolute;
    left: -1px;
    top: -1px;
}
.gauge path {
    fill: none;
    stroke-width: 1.8;
}
.ring-teal { stroke: #3fd6c0; }
.ring-green { stroke: #7ed67a; }
.ring-yellow { stroke: #e8d84a; }
.ring-orange { stroke: #f0a83c; }
.ring-red { stroke: #e85a4a; }
.gauge-num {
    font-family: "Open Sans", sans-serif;
    font-weight: 300;
    font-size: 25px;
    margin-left: -4px;
}
.gauge-pct {
    font-size: 9px;
    margin-top: 8px;
}
```
